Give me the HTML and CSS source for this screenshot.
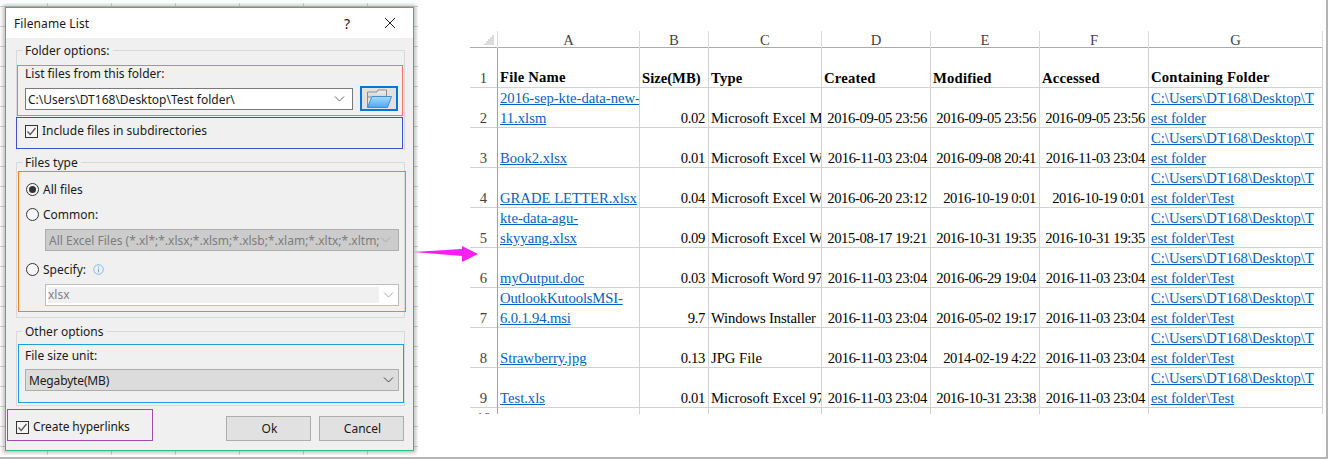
FILE: index.html
```html
<!DOCTYPE html>
<html lang="en">
<head>
<meta charset="utf-8">
<title>Filename List</title>
<link rel="stylesheet" href="styles.css">
</head>
<body>
<div class="page">
  <div class="sheet">
    <div class="dialog">
      <div class="titlebar">
        <span class="title">Filename List</span>
        <span class="help">?</span>
        <svg class="close" width="12" height="12" viewBox="0 0 12 12"><path d="M1 1 L11 11 M11 1 L1 11" stroke="#222" stroke-width="1" fill="none"/></svg>
      </div>
      <div class="body">
        <fieldset class="group group-folder">
          <legend><span>Folder options:</span></legend>
          <div class="box box-red">
            <div class="label">List files from this folder:</div>
            <div class="path-row">
              <div class="combo"><span>C:\Users\DT168\Desktop\Test folder\</span>
                <svg class="chev" width="11" height="6" viewBox="0 0 11 6"><path d="M1 .5 L5.5 5 L10 .5" stroke="#666" fill="none"/></svg>
              </div>
              <div class="browse">
                <svg width="26" height="19" viewBox="0 0 26 19">
                  <defs>
                    <linearGradient id="fg" x1="0" y1="0" x2="0" y2="1"><stop offset="0" stop-color="#a9dcff"/><stop offset="1" stop-color="#4ea6ef"/></linearGradient>
                    <linearGradient id="bk" x1="0" y1="0" x2="0" y2="1"><stop offset="0" stop-color="#f2f2f2"/><stop offset="1" stop-color="#a8a8a8"/></linearGradient>
                  </defs>
                  <path d="M1.5 18 V3 H11 L12 1 H20.5 V8 H1.5" fill="url(#bk)" stroke="#8a8a8a"/>
                  <path d="M1.5 18.5 L6 7.5 H25.5 L21.5 18.5 Z" fill="url(#fg)" stroke="#3f8fd6"/>
                </svg>
              </div>
            </div>
          </div>
          <div class="box box-blue">
            <label class="check-row">
              <svg class="check" width="13" height="13" viewBox="0 0 13 13"><rect x=".5" y=".5" width="12" height="12" fill="#f4f4f4" stroke="#333"/><path d="M2.5 6.5 L5.2 9.5 L10.5 3" stroke="#555" stroke-width="1.2" fill="none"/></svg>
              <span>Include files in subdirectories</span>
            </label>
          </div>
        </fieldset>

        <fieldset class="group group-type">
          <legend><span>Files type</span></legend>
          <div class="box box-orange">
            <div class="radio-row first"><span class="radio on"></span><span>All files</span></div>
            <div class="radio-row"><span class="radio"></span><span>Common:</span></div>
            <div class="select disabled">
              <span class="clip-text">All Excel Files (*.xl*;*.xlsx;*.xlsm;*.xlsb;*.xlam;*.xltx;*.xltm;*</span>
              <svg class="chev" width="11" height="6" viewBox="0 0 11 6"><path d="M1 .5 L5.5 5 L10 .5" stroke="#aaa" fill="none"/></svg>
            </div>
            <div class="radio-row"><span class="radio"></span><span>Specify:</span>
              <svg class="info" width="11" height="11" viewBox="0 0 11 11"><circle cx="5.5" cy="5.5" r="4.8" fill="none" stroke="#8ab8e8"/><path d="M5.5 2.6 V3.8 M5.5 4.8 V8.4" stroke="#6d9fd8" fill="none"/></svg>
            </div>
            <div class="select specify">
              <span class="spec-input">xlsx</span>
              <svg class="chev" width="11" height="6" viewBox="0 0 11 6"><path d="M1 .5 L5.5 5 L10 .5" stroke="#aaa" fill="none"/></svg>
            </div>
          </div>
        </fieldset>

        <fieldset class="group group-other">
          <legend><span>Other options</span></legend>
          <div class="box box-cyan">
            <div class="label">File size unit:</div>
            <div class="select unit">
              <span>Megabyte(MB)</span>
              <svg class="chev" width="11" height="6" viewBox="0 0 11 6"><path d="M1 .5 L5.5 5 L10 .5" stroke="#444" fill="none"/></svg>
            </div>
          </div>
        </fieldset>

        <div class="footer">
          <div class="box box-purple">
            <label class="check-row">
              <svg class="check" width="13" height="13" viewBox="0 0 13 13"><rect x=".5" y=".5" width="12" height="12" fill="#f4f4f4" stroke="#333"/><path d="M2.5 6.5 L5.2 9.5 L10.5 3" stroke="#555" stroke-width="1.2" fill="none"/></svg>
              <span>Create hyperlinks</span>
            </label>
          </div>
          <button class="btn btn-ok" type="button">Ok</button>
          <button class="btn" type="button">Cancel</button>
        </div>
      </div>
    </div>
  </div>

  <div class="result">
    <table class="xl">
      <colgroup>
        <col class="c-row"><col class="c-a"><col class="c-b"><col class="c-c"><col class="c-d"><col class="c-d"><col class="c-d"><col class="c-g">
      </colgroup>
      <thead>
        <tr class="cols">
          <th class="corner"><span class="tri"></span></th><th>A</th><th>B</th><th>C</th><th>D</th><th>E</th><th>F</th><th>G</th>
        </tr>
      </thead>
      <tbody>
        <tr class="hd"><th class="n">1</th><td class="up">File Name</td><td class="fit">Size(MB)</td><td>Type</td><td>Created</td><td>Modified</td><td>Accessed</td><td class="up">Containing Folder</td></tr>
        <tr><th class="n">2</th><td><a href="#">2016-sep-kte-data-new-<br>11.xlsm</a></td><td class="r">0.02</td><td class="clip"><div>Microsoft Excel M</div></td><td class="r">2016-09-05 23:56</td><td class="r">2016-09-05 23:56</td><td class="r">2016-09-05 23:56</td><td><a href="#">C:\Users\DT168\Desktop\T<br>est folder</a></td></tr>
        <tr><th class="n">3</th><td><a href="#">Book2.xlsx</a></td><td class="r">0.01</td><td class="clip"><div>Microsoft Excel W</div></td><td class="r">2016-11-03 23:04</td><td class="r">2016-09-08 20:41</td><td class="r">2016-11-03 23:04</td><td><a href="#">C:\Users\DT168\Desktop\T<br>est folder</a></td></tr>
        <tr><th class="n">4</th><td><a href="#">GRADE LETTER.xlsx</a></td><td class="r">0.04</td><td class="clip"><div>Microsoft Excel W</div></td><td class="r">2016-06-20 23:12</td><td class="r">2016-10-19 0:01</td><td class="r">2016-10-19 0:01</td><td><a href="#">C:\Users\DT168\Desktop\T<br>est folder\Test</a></td></tr>
        <tr><th class="n">5</th><td><a href="#">kte-data-agu-<br>skyyang.xlsx</a></td><td class="r">0.09</td><td class="clip"><div>Microsoft Excel W</div></td><td class="r">2015-08-17 19:21</td><td class="r">2016-10-31 19:35</td><td class="r">2016-10-31 19:35</td><td><a href="#">C:\Users\DT168\Desktop\T<br>est folder\Test</a></td></tr>
        <tr><th class="n">6</th><td><a href="#">myOutput.doc</a></td><td class="r">0.03</td><td class="clip"><div>Microsoft Word 97</div></td><td class="r">2016-11-03 23:04</td><td class="r">2016-06-29 19:04</td><td class="r">2016-11-03 23:04</td><td><a href="#">C:\Users\DT168\Desktop\T<br>est folder\Test</a></td></tr>
        <tr><th class="n">7</th><td><a class="tight" href="#">OutlookKutoolsMSI-<br>6.0.1.94.msi</a></td><td class="r">9.7</td><td class="clip"><div class="tight">Windows Installer</div></td><td class="r">2016-11-03 23:04</td><td class="r">2016-05-02 19:17</td><td class="r">2016-11-03 23:04</td><td><a href="#">C:\Users\DT168\Desktop\T<br>est folder\Test</a></td></tr>
        <tr><th class="n">8</th><td><a href="#">Strawberry.jpg</a></td><td class="r">0.13</td><td class="clip"><div>JPG File</div></td><td class="r">2016-11-03 23:04</td><td class="r">2014-02-19 4:22</td><td class="r">2016-11-03 23:04</td><td><a href="#">C:\Users\DT168\Desktop\T<br>est folder\Test</a></td></tr>
        <tr><th class="n">9</th><td><a href="#">Test.xls</a></td><td class="r">0.01</td><td class="clip"><div>Microsoft Excel 97</div></td><td class="r">2016-11-03 23:04</td><td class="r">2016-10-31 23:38</td><td class="r">2016-11-03 23:04</td><td><a href="#">C:\Users\DT168\Desktop\T<br>est folder\Test</a></td></tr>
        <tr class="stub"><th class="n"><div>10</div></th><td><div></div></td><td><div></div></td><td><div></div></td><td><div></div></td><td><div></div></td><td><div></div></td><td><div></div></td></tr>
      </tbody>
    </table>
  </div>

  <svg class="arrow" width="70" height="20" viewBox="0 0 70 20"><polygon points="0,7 49,4 49,1 65,9 49,17 49,11" fill="#f91ff0"/></svg>
</div>
</body>
</html>
```
FILE: styles.css
```css
* { box-sizing: border-box; }
html, body { margin: 0; padding: 0; background: #fff; }
.page {
  position: relative;
  display: flex;
  width: 1328px;
  height: 459px;
  overflow: hidden;
  border-right: 2px solid #b4b4b4;
  border-bottom: 2px solid #b4b4b4;
  font-family: "Noto Sans", sans-serif;
  font-size: 12px;
  color: #1a1a1a;
}

/* spreadsheet behind the dialog */
.sheet {
  flex: none;
  width: 418px;
  height: 452px;
  margin-top: 3px;
  padding: 4px 0 0 5px;
  overflow: hidden;
  background-color: #fff;
  background-image:
    repeating-linear-gradient(to right, transparent 0, transparent 47px, #d6d6d6 47px, #d6d6d6 48px, transparent 48px, transparent 64px),
    repeating-linear-gradient(to bottom, #d6d6d6 0, #d6d6d6 1px, transparent 1px, transparent 20px);
  background-position: 0 0, 0 3px;
  background-size: 64px 100%, 100% 20px;
}
.dialog {
  width: 409px;
  height: 444px;
  border: 1px solid #27bf80;
  background: #f0f0f0;
  box-shadow: 0 0 4px 2px rgba(0, 0, 0, .25);
}
.titlebar {
  display: flex;
  align-items: center;
  height: 30px;
  padding-left: 8px;
  background: #fff;
}
.title { flex: 1; font-size: 12px; letter-spacing: .1px; }
.help { width: 40px; font-size: 14px; }
.close { margin-right: 17px; }
.body { padding-left: 10px; }

.group {
  width: 389px;
  margin: 0;
  min-width: 0;
  padding: 0;
  border: 1px solid #d9d9d9;
}
.group legend {
  margin-left: 5px;
  padding: 0 3px;
  height: 16px;
  line-height: 18px;
}
.group-folder { height: 108px; margin-top: 4px; padding-top: 7px; border-bottom: 0; }
.group-type { height: 164px; margin-top: 4px; padding-top: 1px; }
.group-other { height: 83px; margin-top: 5px; padding-top: 5px; }

.box { border: 1px solid; }
.box-red { width: 386px; height: 51px; border-color: #f07474; padding: 0 0 0 7px; }
.box-blue { width: 387px; height: 32px; margin: 1px 0 0 -1px; border-color: #3f51c8; padding: 7px 0 0 8px; }
.box-orange { width: 388px; height: 141px; margin-left: 1px; border-color: #ef7f2c; padding: 10px 0 0 7px; }
.box-cyan { width: 386px; height: 59px; margin-left: 1px; border-color: #1c9fe0; padding: 3px 0 0 6px; }
.box-purple { width: 146px; height: 32px; margin: 3px 0 0 -9px; border-color: #a14ba8; padding: 11px 0 0 8px; }

.label { height: 14px; line-height: 16px; }
.path-row { display: flex; align-items: flex-start; margin-top: 6px; gap: 7px; }
.combo {
  display: flex;
  align-items: center;
  justify-content: space-between;
  width: 328px;
  height: 22px;
  margin-top: 2px;
  padding: 0 7px 0 2px;
  border: 1px solid #7a7a7a;
  background: #fff;
}
.browse {
  display: flex;
  align-items: center;
  justify-content: center;
  width: 38px;
  height: 25px;
  border: 2px solid #0078d7;
  background: #e1e1e1;
}
.check-row { display: flex; align-items: flex-start; gap: 4px; line-height: 12px; height: 13px; }
.check { flex: none; }

.radio-row { display: flex; align-items: center; height: 14px; margin-top: 11px; gap: 4px; }
.radio-row.first { margin-top: 0; }
.radio {
  display: flex;
  align-items: center;
  justify-content: center;
  width: 13px;
  height: 13px;
  border: 1px solid #333;
  border-radius: 50%;
  background: #f6f6f6;
}
.radio.on::after {
  content: "";
  width: 7px;
  height: 7px;
  border-radius: 50%;
  background: #333;
}
.info { margin-left: 3px; }

.select {
  display: flex;
  align-items: center;
  justify-content: space-between;
  height: 22px;
  border: 1px solid #adadad;
}
.select.disabled {
  width: 354px;
  margin: 8px 0 0 19px;
  padding: 0 7px 0 3px;
  background: #cccccc;
  color: #7d7d7d;
}
.clip-text { width: 330px; overflow: hidden; white-space: nowrap; }
.select.specify {
  width: 354px;
  margin: 8px 0 0 19px;
  padding: 2px 4px 2px 2px;
  background: #fff;
  border-color: #bdbdbd;
  color: #808080;
}
.spec-input { width: 331px; height: 16px; line-height: 16px; background: #f0f0f0; }
.select.unit {
  width: 374px;
  margin-top: 7px;
  padding: 0 4px 0 3px;
  background: #dcdcdc;
  letter-spacing: -.15px;
}

.footer { display: flex; align-items: flex-start; }
.footer .check-row { letter-spacing: -.1px; }
.btn {
  width: 85px;
  height: 25px;
  margin: 10px 0 0 8px;
  padding: 0 0 0 2px;
  border: 1px solid #adadad;
  background: #e1e1e1;
  font: inherit;
  color: #1a1a1a;
}
.btn-ok { margin-left: 73px; }

/* exported spreadsheet */
.result { flex: none; padding: 31px 0 0 52px; }
.xl {
  table-layout: fixed;
  width: 853px;
  border-collapse: separate;
  border-spacing: 0;
  font-family: "Liberation Serif", serif;
  font-size: 14.67px;
  line-height: 20px;
  color: #000;
}
.c-row { width: 28px; }
.c-a { width: 142px; }
.c-b { width: 69px; }
.c-c { width: 113px; }
.c-d { width: 109px; }
.c-g { width: 174px; }
.xl th, .xl td {
  padding: 0 2px;
  border-right: 1px solid #d2d2d2;
  box-shadow: inset 0 -1px #d2d2d2;
  vertical-align: bottom;
  white-space: nowrap;
  overflow: hidden;
}
.xl th { font-weight: 400; color: #444; text-align: center; }
.cols { height: 17px; }
.xl .cols th { line-height: 16px; box-shadow: inset 0 -1px #ababab; border-right-color: #dcdcdc; vertical-align: middle; }
.xl .cols .corner { padding: 0; }
.tri {
  display: block;
  width: 11px;
  height: 11px;
  margin: 0 3px 0 auto;
  background: linear-gradient(to bottom right, transparent 50%, #dcdcdc 50%);
}
.xl tbody tr { height: 40px; }
.xl .n { border-right-color: #a6a6a6; }
.hd td { font-weight: 700; letter-spacing: .2px; }
.hd td.fit { letter-spacing: 0; }
.hd td.up { padding-bottom: 1px; }
.xl td.r { text-align: right; padding-right: 3px; letter-spacing: -.35px; }
.xl td.clip { padding-right: 0; }
.clip div { overflow: hidden; white-space: nowrap; }
.tight { letter-spacing: -.15px; }
.xl a { color: #0563c1; text-decoration: underline; }
.xl tbody tr.stub { height: 6px; }
.xl .stub th, .xl .stub td { box-shadow: none; padding-top: 0; padding-bottom: 0; vertical-align: top; }
.stub div { height: 6px; overflow: hidden; }

.arrow { position: absolute; left: 413px; top: 245px; }
```
